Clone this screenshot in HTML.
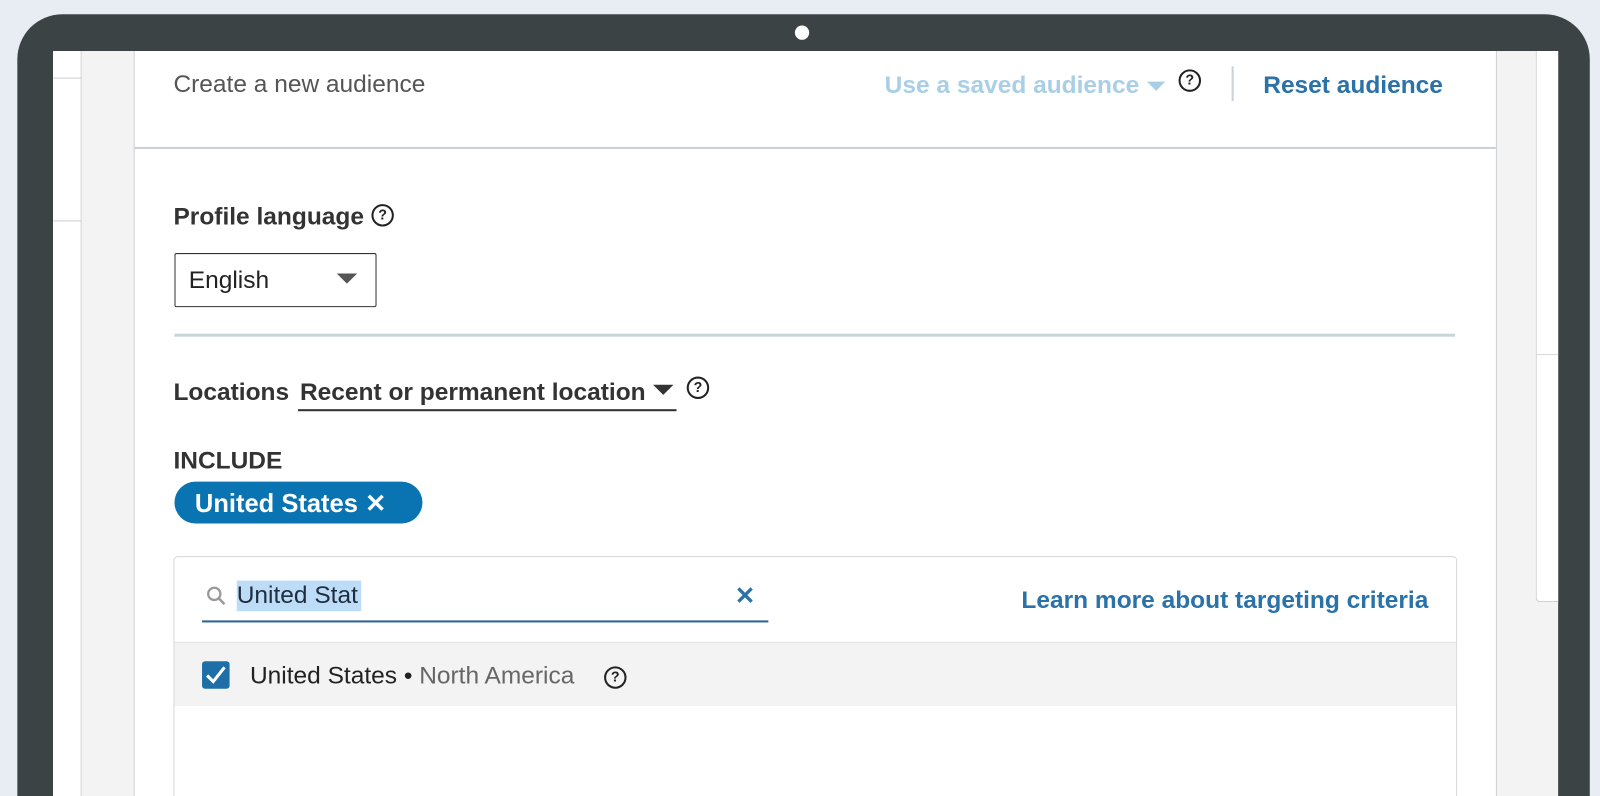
<!DOCTYPE html>
<html style="width:1600px;height:796px;overflow:hidden"><head><style>
*{margin:0;padding:0;box-sizing:border-box}
body{width:1600px;height:796px;overflow:hidden;background:#e8edf3;font-family:"Liberation Sans",sans-serif;position:relative}
#w{position:absolute;left:0;top:0;width:1568px;height:780px;transform:scale(1.0204);transform-origin:0 0}
.a{position:absolute}
.q{position:absolute;width:22px;height:22px;border:2.5px solid #222;border-radius:50%;font:bold 14px "Liberation Sans";text-align:center;line-height:17px;color:#222}
</style></head><body><div id="w">
<div class="a" style="left:17px;top:14px;width:1541px;height:782px;background:#3c4345;border-radius:44px 44px 0 0"></div>
<div class="a" style="left:779px;top:25px;width:14px;height:14px;background:#fff;border-radius:50%"></div>
<div class="a" style="left:52px;top:50px;width:1475px;height:746px;background:#f3f3f4"></div>
<div class="a" style="left:52px;top:50px;width:28px;height:746px;background:#fff;border-right:1px solid #d5d5d8"></div>
<div class="a" style="left:52px;top:76px;width:28px;height:1px;background:#d0d0d3"></div>
<div class="a" style="left:52px;top:216px;width:28px;height:1px;background:#d0d0d3"></div>
<div class="a" style="left:1505px;top:50px;width:22px;height:540px;background:#fff;border-left:1px solid #d0d0d3;border-bottom:1px solid #d0d0d3;border-bottom-left-radius:4px"></div>
<div class="a" style="left:1505px;top:347px;width:22px;height:1px;background:#d8d8db"></div>
<div class="a" style="left:131px;top:50px;width:1336px;height:746px;background:#fff;border-left:1px solid #cfd0d3;border-right:1px solid #cfd0d3"></div>
<div class="a" style="left:132px;top:144px;width:1334px;height:2px;background:#c9d2d8"></div>
<div class="a" style="left:170px;top:69px;font-size:24px;color:#555">Create a new audience</div>
<div class="a" style="left:867px;top:70px;font-size:24px;color:#a9cfe6;font-weight:bold">Use a saved audience</div>
<div class="a" style="left:1124px;top:80px;border-left:9px solid transparent;border-right:9px solid transparent;border-top:9px solid #a9cfe6"></div>
<div class="q" style="left:1155px;top:68px">?</div>
<div class="a" style="left:1207px;top:65px;width:2px;height:34px;background:#c9d2d8"></div>
<div class="a" style="left:1238px;top:70px;font-size:24px;color:#2a72a8;font-weight:bold">Reset audience</div>
<div class="a" style="left:170px;top:199px;font-size:24px;color:#333;font-weight:bold">Profile language</div>
<div class="q" style="left:364px;top:200px">?</div>
<div class="a" style="left:171px;top:248px;width:198px;height:53px;border:1px solid #333;border-radius:2px"></div>
<div class="a" style="left:185px;top:261px;font-size:24px;color:#222">English</div>
<div class="a" style="left:330px;top:268px;border-left:10px solid transparent;border-right:10px solid transparent;border-top:10px solid #555"></div>
<div class="a" style="left:171px;top:327px;width:1255px;height:3px;background:#c9d6d9"></div>
<div class="a" style="left:170px;top:371px;font-size:24px;color:#333;font-weight:bold">Locations</div>
<div class="a" style="left:294px;top:371px;font-size:24px;color:#333;font-weight:bold">Recent or permanent location</div>
<div class="a" style="left:640px;top:377px;border-left:10px solid transparent;border-right:10px solid transparent;border-top:10px solid #333"></div>
<div class="a" style="left:292px;top:401px;width:371px;height:2px;background:#333"></div>
<div class="q" style="left:673px;top:369px">?</div>
<div class="a" style="left:170px;top:438px;font-size:24px;color:#333;font-weight:bold">INCLUDE</div>
<div class="a" style="left:171px;top:472px;width:243px;height:41px;background:#0a73b1;border-radius:21px;color:#fff;font-size:25px;font-weight:bold;padding:7px 0 0 20px;white-space:nowrap">United States ✕</div>
<div class="a" style="left:170px;top:545px;width:1258px;height:260px;border:1px solid #d8d8db;border-radius:4px;background:#fff"></div>
<div class="a" style="left:171px;top:629px;width:1256px;height:63px;background:#f3f3f4;border-top:1px solid #e2e2e4"></div>
<svg class="a" style="left:202px;top:574px" width="20" height="20" viewBox="0 0 20 20"><circle cx="8" cy="8" r="6" fill="none" stroke="#999" stroke-width="2.2"/><path d="M12.5 12.5L18 18" stroke="#999" stroke-width="2.4"/></svg>
<div class="a" style="left:232px;top:569px;height:30px;width:122px;background:#bddcf7"></div>
<div class="a" style="left:232px;top:570px;font-size:24px;color:#1f2d3d;white-space:nowrap">United Stat</div>
<div class="a" style="left:720px;top:570px;font-size:24px;color:#2a72a8;font-weight:bold">✕</div>
<div class="a" style="left:198px;top:608px;width:555px;height:2px;background:#2a6496"></div>
<div class="a" style="left:1001px;top:575px;font-size:24px;color:#2a72a8;font-weight:bold;white-space:nowrap">Learn more about targeting criteria</div>
<div class="a" style="left:198px;top:648px;width:27px;height:27px;background:#1e6fa8;border-radius:3px"></div>
<svg class="a" style="left:198px;top:648px" width="27" height="27"><path d="M5 14l6 6L22 6" fill="none" stroke="#fff" stroke-width="3"/></svg>
<div class="a" style="left:245px;top:649px;font-size:24px;color:#222;white-space:nowrap">United States • <span style="color:#666">North America</span></div>
<div class="q" style="left:592px;top:653px">?</div>
</div></body></html>
